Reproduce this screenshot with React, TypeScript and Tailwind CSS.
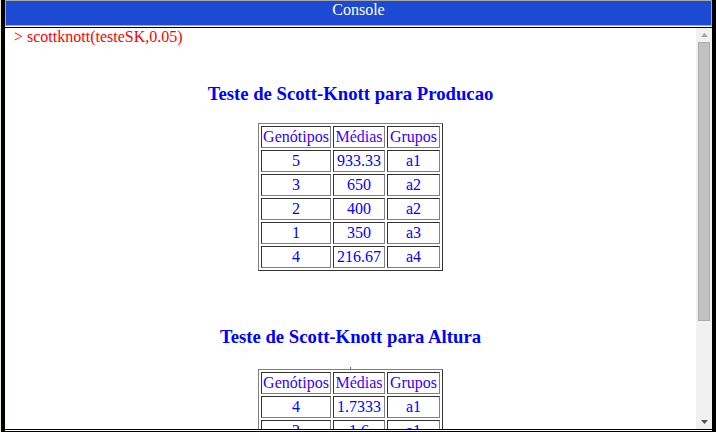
import React from "react";

const rows1: [string, string, string][] = [
  ["5", "933.33", "a1"],
  ["3", "650", "a2"],
  ["2", "400", "a2"],
  ["1", "350", "a3"],
  ["4", "216.67", "a4"],
];

const rows2: [string, string, string][] = [
  ["4", "1.7333", "a1"],
  ["3", "1.6", "a1"],
  ["5", "1.5", "a1"],
];

const cell =
  "border border-t-[#333333] border-l-[#333333] border-r-[#808080] border-b-[#808080] px-[1px] py-[1px] leading-[18px] text-center";

function ResultTable({ rows }: { rows: [string, string, string][] }) {
  return (
    <table className="mx-auto border-separate border-spacing-[2px] border border-t-[#808080] border-l-[#808080] border-r-[#333333] border-b-[#333333] text-[16px] text-[#0000ff]">
      <thead>
        <tr>
          <th className={`${cell} w-[70px] font-normal text-[#3300ff]`}>Genótipos</th>
          <th className={`${cell} w-[52px] font-normal text-[#4400ff]`}>Médias</th>
          <th className={`${cell} w-[53px] font-normal text-[#3300ff]`}>Grupos</th>
        </tr>
      </thead>
      <tbody>
        {rows.map((r, i) => (
          <tr key={i}>
            <td className={cell}>{r[0]}</td>
            <td className={cell}>{r[1]}</td>
            <td className={cell}>{r[2]}</td>
          </tr>
        ))}
      </tbody>
    </table>
  );
}

export default function App() {
  return (
    <div className="w-[716px] h-[432px] flex bg-black overflow-hidden font-['Liberation_Serif',serif]">
      <div className="w-[1px] h-full bg-[#efefcf]" />
      <div className="w-[4px] h-full bg-black" />
      <div className="w-[707px] h-full flex flex-col">
        {/* Header */}
        <div className="h-[26px] border border-[#a8a8a8] bg-[#1c4ad2] text-white text-[16px] leading-[18px] text-center">
          Console
        </div>
        <div className="h-[1px] bg-white" />
        <div className="h-[1px] bg-black" />
        {/* Content */}
        <div className="h-[401px] flex bg-white">
          <div className="w-[691px] h-full overflow-hidden">
            <div className="pl-[9px] leading-[18px] text-[16px] text-[#ff0000]">
              &gt; scottknott(testeSK,0.05)
            </div>
            <h3 className="mt-[37px] text-center text-[18.72px] leading-[21px] font-bold text-[#0000ff]">
              Teste de Scott-Knott para Producao
            </h3>
            <div className="mt-[19px]">
              <ResultTable rows={rows1} />
            </div>
            <h3 className="mt-[55px] text-center text-[18.72px] leading-[21px] font-bold text-[#0000ff]">
              Teste de Scott-Knott para Altura
            </h3>
            <div className="h-[22px] flex justify-center items-end">
              <span className="w-[1px] h-[2px] bg-[#666666]" />
            </div>
            <ResultTable rows={rows2} />
          </div>
          {/* Scrollbar */}
          <div className="w-[16px] h-full bg-[#f1f1f1] flex flex-col">
            <div className="h-[14px] flex items-center justify-center">
              <svg width="7" height="4" viewBox="0 0 7 4">
                <polygon points="3.5,0 7,4 0,4" fill="#a3a3a3" />
              </svg>
            </div>
            <div className="px-[2px]">
              <div className="h-[279px] bg-[#c1c1c1] border border-[#a9a9a9]" />
            </div>
            <div className="flex-1" />
            <div className="h-[14px] flex items-center justify-center">
              <svg width="7" height="4" viewBox="0 0 7 4">
                <polygon points="0,0 7,0 3.5,4" fill="#505050" />
              </svg>
            </div>
          </div>
        </div>
        <div className="h-[1px] bg-black" />
        <div className="h-[1px] bg-white" />
        <div className="h-[1px] bg-black" />
      </div>
      <div className="w-[4px] h-full bg-black" />
    </div>
  );
}
